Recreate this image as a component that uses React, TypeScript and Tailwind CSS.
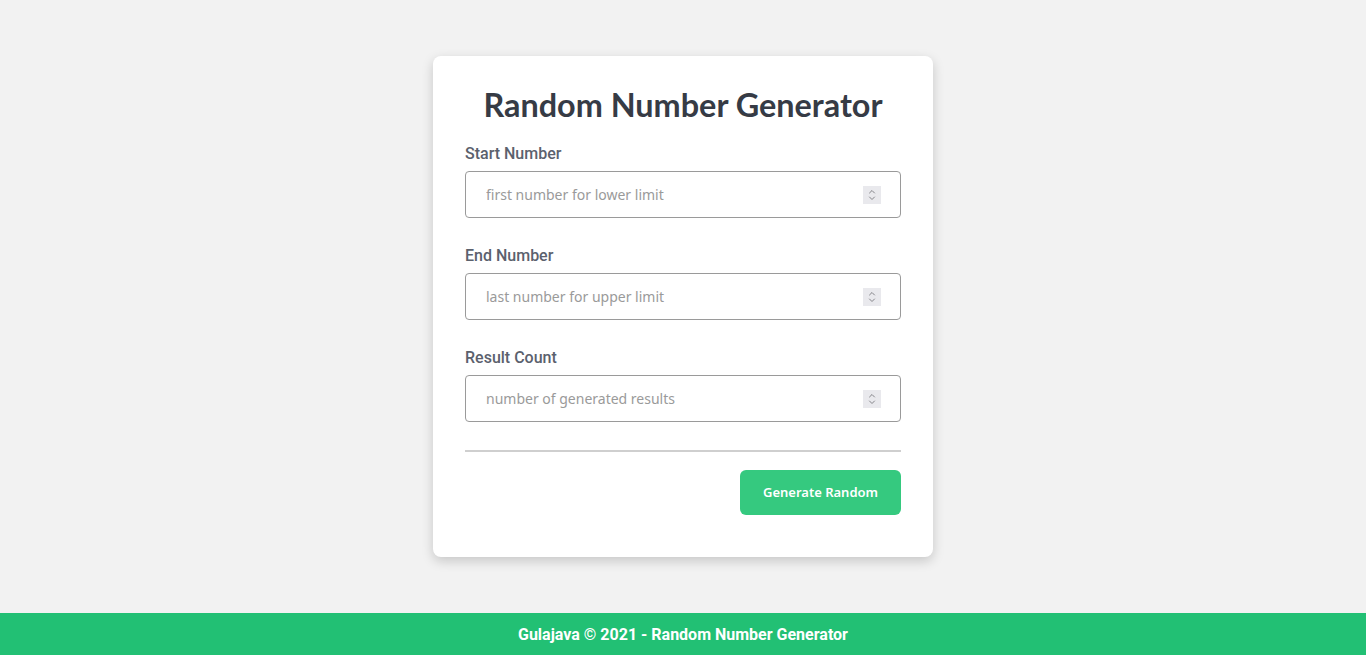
import React from "react";

type Field = { label: string; placeholder: string };

const fields: Field[] = [
  { label: "Start Number", placeholder: "first number for lower limit" },
  { label: "End Number", placeholder: "last number for upper limit" },
  { label: "Result Count", placeholder: "number of generated results" },
];

function Spinner() {
  return (
    <div className="pointer-events-none absolute right-[20px] top-1/2 flex h-[18px] w-[18px] -translate-y-1/2 items-center justify-center bg-[#e9e9ed]">
      <svg width="10" height="14" viewBox="0 0 10 14" fill="none" stroke="#85858a" strokeWidth="1" strokeLinecap="round" strokeLinejoin="round">
        <path d="M2.5 5 L5 2.5 L7.5 5" />
        <path d="M2.5 9 L5 11.5 L7.5 9" />
      </svg>
    </div>
  );
}

export default function App() {
  return (
    <div className="flex min-h-[655px] flex-col bg-[#f2f2f2]" style={{ fontFamily: "Roboto, 'Liberation Sans', sans-serif" }}>
      <main className="flex flex-1 justify-center pt-[56px]">
        <div className="h-[501px] w-[500px] rounded-[8px] bg-white px-8 pt-8 shadow-[0_4px_12px_rgba(0,0,0,0.18)]">
          <h1 className="text-center text-[32.4px] font-bold leading-[34px] text-[#363b45]" style={{ fontFamily: "Lato, sans-serif" }}>
            Random Number Generator
          </h1>
          <div className="mt-[20px] flex flex-col gap-[26px]">
            {fields.map((f) => (
              <div key={f.label} className="flex flex-col">
                <label className="text-[16px] font-medium leading-[24px] text-[#5b616d]">{f.label}</label>
                <div className="relative mt-[5px]">
                  <input
                    type="text"
                    placeholder={f.placeholder}
                    className="h-[47px] w-full rounded-[4px] border border-[#9a9a9a] bg-white pb-[1px] pl-[20px] pr-[48px] text-[14px] text-[#333] outline-none placeholder:text-[#9a9a9a]"
                    style={{ fontFamily: "'Noto Sans', 'Open Sans', sans-serif" }}
                  />
                  <Spinner />
                </div>
              </div>
            ))}
          </div>
          <div className="mt-[28px] border-t-2 border-[#cfcfcf]" />
          <div className="mt-[18px] flex justify-end">
            <button
              className="h-[45px] w-[161px] rounded-[6px] bg-[#35c97f] text-[13px] font-semibold text-white"
              style={{ fontFamily: "'Noto Sans', 'Open Sans', sans-serif" }}
            >
              Generate Random
            </button>
          </div>
        </div>
      </main>
      <footer className="flex h-[42px] items-center justify-center bg-[#22c074] pt-[2px] text-[16px] font-bold text-white">
        Gulajava © 2021 - Random Number Generator
      </footer>
    </div>
  );
}
